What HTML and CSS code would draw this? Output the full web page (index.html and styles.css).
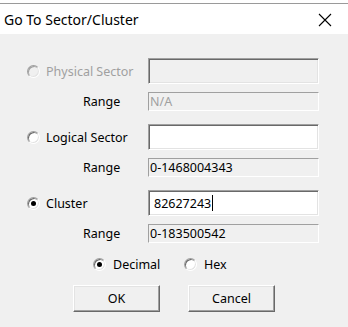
FILE: index.html
```html
<!DOCTYPE html>
<html>
<head>
  <title>Go To Sector/Cluster</title>
  <link rel="stylesheet" href="styles.css">
</head>
<body>

<div class="behind"><div class="behind-line"></div></div>

<div class="dialog">
  <div class="titlebar">
    <span class="title">Go To Sector/Cluster</span>
    <svg class="close" width="14" height="14" viewBox="0 0 14 14">
      <path d="M1 1 L13 13 M13 1 L1 13" stroke="#000" stroke-width="1.1" fill="none"/>
    </svg>
  </div>

  <div class="content">
    <div class="row main">
      <div class="choice disabled"><span class="radio"></span>Physical Sector</div>
      <div class="field edit disabled"></div>
    </div>
    <div class="row sub">
      <div class="range">Range</div>
      <div class="field static disabled">N/A</div>
    </div>

    <div class="row main">
      <div class="choice"><span class="radio"></span>Logical Sector</div>
      <div class="field edit"></div>
    </div>
    <div class="row sub">
      <div class="range">Range</div>
      <div class="field static">0-1468004343</div>
    </div>

    <div class="row main">
      <div class="choice"><span class="radio checked"></span>Cluster</div>
      <div class="field edit">82627243<span class="caret"></span></div>
    </div>
    <div class="row sub">
      <div class="range">Range</div>
      <div class="field static">0-183500542</div>
    </div>

    <div class="base-row">
      <div class="choice"><span class="radio checked"></span>Decimal</div>
      <div class="choice"><span class="radio"></span>Hex</div>
    </div>

    <div class="buttons">
      <button class="btn">OK</button>
      <button class="btn">Cancel</button>
    </div>
  </div>
</div>

</body>
</html>
```
FILE: styles.css
```css
body {
  margin: 0;
  width: 348px;
  height: 327px;
  overflow: hidden;
  background-color: #f0f0f0;
  font-family: 'Noto Sans', sans-serif;
  font-size: 12.5px;
  color: #000;
}

.behind {
  height: 5px;
  background-color: #fff;
  padding-top: 3px;
  box-sizing: border-box;
}

.behind-line {
  height: 1px;
  background-color: #9a9a9a;
}

.titlebar {
  height: 29px;
  background-color: #fff;
  display: flex;
  align-items: center;
  justify-content: space-between;
  padding: 0 16px 0 4px;
}

.title {
  font-size: 14px;
  color: #000;
}

.content {
  padding: 24px 0 0 0;
}

.row {
  display: flex;
  align-items: center;
}

.row.main {
  height: 26px;
  margin-bottom: 8px;
}

.row.sub {
  height: 19px;
  margin-bottom: 13px;
}

.row .choice {
  width: 148px;
  padding-left: 27px;
  box-sizing: border-box;
}

.range {
  width: 148px;
  padding-left: 83px;
  box-sizing: border-box;
}

.choice {
  display: flex;
  align-items: center;
}

.choice.disabled {
  color: #a0a0a0;
}

.radio {
  position: relative;
  width: 11px;
  height: 11px;
  border-radius: 50%;
  border: 1px solid;
  border-color: #a0a0a0 #fff #fff #a0a0a0;
  background-color: #fff;
  box-shadow: inset 1px 1px 0 #696969, inset -1px -1px 0 #e3e3e3;
  margin-right: 6px;
  flex: none;
}

.choice.disabled .radio {
  background-color: #f0f0f0;
  box-shadow: inset 1px 1px 0 #a0a0a0, inset -1px -1px 0 #e3e3e3;
}

.radio.checked::after {
  content: '';
  position: absolute;
  left: 3px;
  top: 3px;
  width: 5px;
  height: 5px;
  border-radius: 50%;
  background-color: #000;
}

.field {
  width: 171px;
  height: 100%;
  box-sizing: border-box;
  display: flex;
  align-items: center;
  padding-left: 3px;
  white-space: nowrap;
}

.field.edit {
  background-color: #fff;
  border: 1px solid;
  border-color: #a0a0a0 #fff #fff #a0a0a0;
  box-shadow: inset 1px 1px 0 #696969, inset -1px -1px 0 #e3e3e3;
  padding-left: 5px;
}

.field.edit.disabled {
  background-color: #f0f0f0;
}

.field.static {
  background-color: #f0f0f0;
  border: 1px solid;
  border-color: #a0a0a0 #fff #fff #a0a0a0;
  padding-left: 1px;
}

.field.static.disabled {
  color: #a0a0a0;
}

.caret {
  display: inline-block;
  width: 1px;
  height: 16px;
  background-color: #000;
  margin-left: 1px;
}

.base-row {
  display: flex;
  align-items: center;
  height: 16px;
  margin-top: 1px;
  padding-left: 93px;
}

.base-row .choice {
  width: 91px;
}

.base-row .radio {
  margin-right: 7px;
}

.buttons {
  display: flex;
  gap: 28px;
  padding-left: 73px;
  margin-top: 13px;
}

.btn {
  width: 87px;
  height: 27px;
  font-family: 'Noto Sans', sans-serif;
  font-size: 12.5px;
  color: #000;
  background-color: #f0f0f0;
  border: 1px solid;
  border-color: #fff #696969 #696969 #fff;
  box-shadow: inset -1px -1px 0 #a0a0a0, inset 1px 1px 0 #e3e3e3;
  padding: 0;
}
```
